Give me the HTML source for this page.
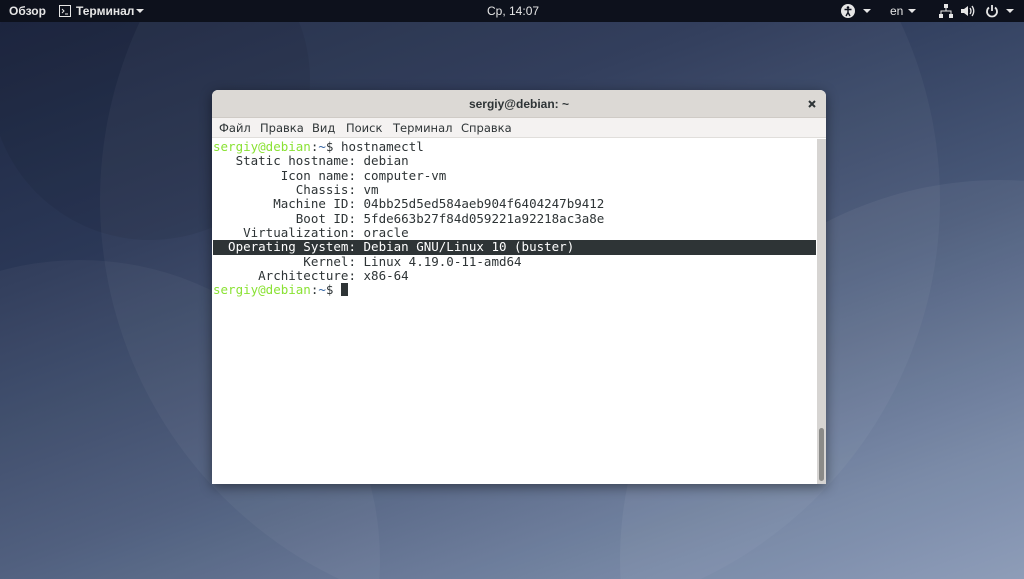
<!DOCTYPE html>
<html><head><meta charset="utf-8"><style>
*{margin:0;padding:0;box-sizing:border-box}
html,body{width:1024px;height:579px;overflow:hidden}
body{position:relative;font-family:"DejaVu Sans","Liberation Sans",sans-serif;
background:linear-gradient(160deg,#1d2640 0%,#2b3857 30%,#4a5a7a 60%,#7384a3 85%,#8898b5 100%);}
#bg{position:absolute;left:0;top:0}
.top{position:absolute;left:0;top:0;width:1024px;height:22px;background:#0d111c;color:#e6e6e6;font-size:12px;font-weight:bold;font-family:"Liberation Sans",sans-serif}
.top span{position:absolute;top:4px}
.win{position:absolute;left:212px;top:90px;width:614px;height:394px;background:#fff;border-radius:6px 6px 0 0;box-shadow:0 3px 12px rgba(0,0,0,.45);overflow:hidden}
.title{height:28px;background:#dcd9d5;text-align:center;font-size:12px;font-weight:bold;color:#2e3436;line-height:28px;border-bottom:1px solid #cfcbc6;font-family:"Liberation Sans",sans-serif}
.menu{position:relative;height:20px;background:#f4f2f1;font-size:11.5px;color:#2e3436;line-height:20px;border-bottom:1px solid #e0dedb}
.menu span{position:absolute;top:0}
.term{position:absolute;left:1px;top:50px;font-family:"DejaVu Sans Mono","Liberation Mono",monospace;font-size:12.5px;line-height:14.35px;white-space:pre;color:#2e3436}
.g{color:#8ae234}.b{color:#3465a4}
.hl{background:#2e3436;color:#fff;display:inline-block;width:603px}
.cur{display:inline-block;width:7px;height:13px;background:#2e3436;vertical-align:-2px}
.sb{position:absolute;left:605px;top:49px;width:9px;height:345px;background:#d6d4d2}
.th{position:absolute;left:2px;top:289px;width:5px;height:53px;background:#8a8a88;border-radius:3px}
</style></head><body>
<svg id="bg" width="1024" height="579">
<circle cx="520" cy="200" r="420" fill="#ffffff" opacity=".04"/>
<circle cx="1000" cy="560" r="380" fill="#ffffff" opacity=".05"/>
<circle cx="80" cy="560" r="300" fill="#ffffff" opacity=".04"/>
<circle cx="150" cy="80" r="160" fill="#000000" opacity=".06"/>
</svg>
<div class="top">
<span style="left:9px">Обзор</span>
<svg style="position:absolute;left:59px;top:5px" width="12" height="12"><rect x=".5" y=".5" width="11" height="11" fill="none" stroke="#e6e6e6"/><path d="M3 4l2 2-2 2M6 9h3" stroke="#e6e6e6" fill="none"/></svg>
<span style="left:76px">Терминал</span>
<svg style="position:absolute;left:136px;top:9px" width="8" height="5"><path d="M0 0h8L4 4z" fill="#e6e6e6"/></svg>
<span style="left:487px;font-weight:normal">Ср, 14:07</span>
<svg style="position:absolute;left:841px;top:4px" width="14" height="14"><circle cx="7" cy="7" r="7" fill="#e6e6e6"/><circle cx="7" cy="3.5" r="1.3" fill="#0d111c"/><path d="M3.5 5.5h7M7 5.5v3l-2 3.5M7 8.5l2 3.5" stroke="#0d111c" stroke-width="1.4" fill="none"/></svg>
<svg style="position:absolute;left:863px;top:9px" width="8" height="5"><path d="M0 0h8L4 4z" fill="#e6e6e6"/></svg>
<span style="left:890px;font-weight:normal">en</span>
<svg style="position:absolute;left:908px;top:9px" width="8" height="5"><path d="M0 0h8L4 4z" fill="#e6e6e6"/></svg>
<svg style="position:absolute;left:939px;top:4px" width="14" height="14"><rect x="5" y="0" width="4" height="4" fill="#e6e6e6"/><rect x="0" y="10" width="4" height="4" fill="#e6e6e6"/><rect x="10" y="10" width="4" height="4" fill="#e6e6e6"/><path d="M7 4v3M2 10V7h10v3" stroke="#e6e6e6" fill="none"/></svg>
<svg style="position:absolute;left:961px;top:5px" width="14" height="12"><path d="M0 4h3l4-3v10L3 8H0z" fill="#e6e6e6"/><path d="M9 3q2 3 0 6M11 1q3.5 5 0 10" stroke="#e6e6e6" fill="none" stroke-width="1.3"/></svg>
<svg style="position:absolute;left:985px;top:4px" width="14" height="14"><path d="M4 3.5A5 5 0 1 0 10 3.5" stroke="#e6e6e6" stroke-width="1.8" fill="none"/><path d="M7 1v6" stroke="#e6e6e6" stroke-width="1.8"/></svg>
<svg style="position:absolute;left:1006px;top:9px" width="8" height="5"><path d="M0 0h8L4 4z" fill="#e6e6e6"/></svg>
</div>
<div class="win">
<div class="title">sergiy@debian: ~</div>
<svg style="position:absolute;left:596px;top:10px" width="8" height="8"><path d="M1 1l6 6M7 1L1 7" stroke="#2e3436" stroke-width="2"/></svg>
<div class="menu"><span style="left:7px">Файл</span><span style="left:48px">Правка</span><span style="left:100px">Вид</span><span style="left:134px">Поиск</span><span style="left:181px">Терминал</span><span style="left:249px">Справка</span></div>
<div class="term"><span class="g">sergiy@debian</span>:<span class="b">~</span>$ hostnamectl
   Static hostname: debian
         Icon name: computer-vm
           Chassis: vm
        Machine ID: 04bb25d5ed584aeb904f6404247b9412
           Boot ID: 5fde663b27f84d059221a92218ac3a8e
    Virtualization: oracle
<span class="hl">  Operating System: Debian GNU/Linux 10 (buster)</span>
            Kernel: Linux 4.19.0-11-amd64
      Architecture: x86-64
<span class="g">sergiy@debian</span>:<span class="b">~</span>$ <span class="cur"></span></div>
<div class="sb"><div class="th"></div></div>
</div>
</body></html>
